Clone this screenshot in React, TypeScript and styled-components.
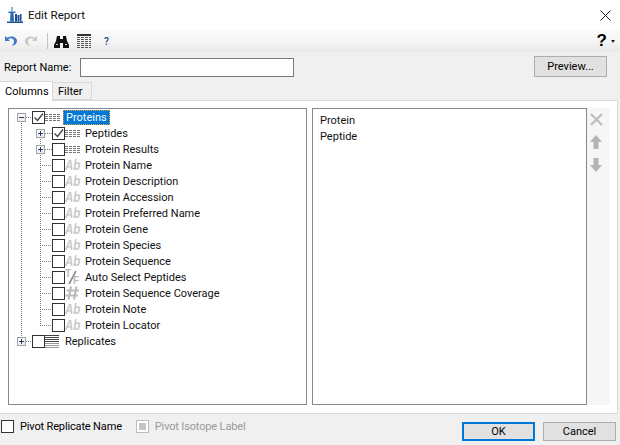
import React from 'react';
import styled, { createGlobalStyle } from 'styled-components';

const GlobalStyle = createGlobalStyle`
  html, body { margin: 0; padding: 0; background: #f0f0f0; }
  body { font-family: Roboto, "Noto Sans", sans-serif; font-size: 11px; color: #000; }
`;

const Dialog = styled.div`
  width: 620px;
  height: 445px;
  display: flex;
  flex-direction: column;
  overflow: hidden;
  background: #f0f0f0;
`;

/* ---------- title bar ---------- */
const TitleBar = styled.div`
  height: 30px;
  display: flex;
  align-items: center;
  padding-left: 7px;
  gap: 5px;
  background: #fff;
  font-size: 11.6px;
`;
const TitleText = styled.span`
  flex: 1;
  color: #111;
`;
const CloseBox = styled.div`
  width: 30px;
  display: flex;
  justify-content: center;
`;

/* ---------- toolbar ---------- */
const ToolBar = styled.div`
  height: 22px;
  display: flex;
  align-items: center;
  padding: 0 3px 0 4px;
  background: linear-gradient(#fbfbfb, #f6f6f6 45%, #e9e9e9);
`;
const ToolSlot = styled.div<{ $gap: number; $flip?: boolean }>`
  display: flex;
  margin-left: ${p => p.$gap}px;
  ${p => p.$flip && 'transform: scaleX(-1);'}
`;
const ToolSep = styled.div`
  width: 1px;
  height: 16px;
  background: #c4c4c4;
  margin-left: 9px;
`;
const HelpMark = styled.span`
  font-size: 10px;
  margin-left: 13px;
  color: #1a3f7a;
  font-weight: 500;
`;
const BigHelp = styled.span`
  margin-left: auto;
  font-family: "Liberation Sans", sans-serif;
  font-size: 17px;
  font-weight: 700;
  display: flex;
  align-items: center;
  gap: 4px;
  padding-right: 2px;
`;
const Caret = styled.i`
  width: 0;
  height: 0;
  border-left: 2.5px solid transparent;
  border-right: 2.5px solid transparent;
  border-top: 3px solid #222;
`;

/* ---------- report name ---------- */
const NameRow = styled.div`
  height: 29px;
  display: flex;
  align-items: flex-start;
  padding: 0 13px 0 4px;
`;
const NameLabel = styled.label`
  width: 76px;
  margin-top: 9px;
`;
const NameInput = styled.div`
  width: 214px;
  height: 19px;
  box-sizing: border-box;
  margin-top: 6px;
  background: #fff;
  border: 1px solid #7a7a7a;
`;
const PreviewButton = styled.div`
  margin-left: auto;
  width: 73px;
  height: 21px;
  box-sizing: border-box;
  margin-top: 4px;
  display: flex;
  align-items: center;
  justify-content: center;
  background: #e1e1e1;
  border: 1px solid #adadad;
`;

/* ---------- tabs ---------- */
const TabStrip = styled.div`
  height: 19px;
  display: flex;
  align-items: flex-end;
`;
const Tab = styled.div<{ $active?: boolean }>`
  height: ${p => (p.$active ? 20 : 18)}px;
  width: ${p => (p.$active ? 53 : 39)}px;
  margin-bottom: ${p => (p.$active ? -1 : 0)}px;
  box-sizing: border-box;
  display: flex;
  align-items: center;
  padding-left: 5px;
  background: ${p => (p.$active ? '#fff' : '#f0f0f0')};
  border: 1px solid #d9d9d9;
  border-bottom: ${p => (p.$active ? 'none' : '1px solid #d9d9d9')};
  border-left: ${p => (p.$active ? 'none' : '0')};
  position: relative;
  z-index: ${p => (p.$active ? 1 : 0)};
`;
const TabPanel = styled.div`
  height: 314px;
  width: 618px;
  box-sizing: border-box;
  background: #fff;
  border-top: 1px solid #d9d9d9;
  border-right: 1px solid #d9d9d9;
  border-bottom: 1px solid #d9d9d9;
  display: flex;
  padding: 7px 7px 8px 8px;
`;

/* ---------- tree ---------- */
const dotsV = 'repeating-linear-gradient(#808080 0 1px, transparent 1px 2px)';
const dotsH = 'repeating-linear-gradient(90deg, #808080 0 1px, transparent 1px 2px)';

const TreeBox = styled.div`
  width: 299px;
  box-sizing: border-box;
  border: 1px solid #828790;
  background: #fff;
`;
const TreeRow = styled.div`
  height: 16px;
  display: flex;
  align-items: center;
  white-space: nowrap;
  color: #111;
`;
const Spacer = styled.div<{ $w: number }>`
  width: ${p => p.$w}px;
  height: 16px;
  flex: none;
`;
const Guide = styled(Spacer)`
  background: ${dotsV} left / 1px 100% no-repeat;
`;
/* horizontal connector with the node's piece of vertical line */
const Branch = styled(Spacer)<{ $last?: boolean }>`
  background:
    ${dotsH} left 8px / 100% 1px no-repeat,
    ${dotsV} left top / 1px ${p => (p.$last ? '50%' : '100%')} no-repeat;
`;
const ExpanderCell = styled.div<{ $w: number; $up?: boolean; $down?: boolean }>`
  width: ${p => p.$w}px;
  height: 16px;
  flex: none;
  display: flex;
  align-items: center;
  background:
    ${p => (p.$up ? `${dotsV} 4px top / 1px 50% no-repeat,` : '')}
    ${p => (p.$down ? `${dotsV} 4px bottom / 1px 50% no-repeat,` : '')}
    none;
`;
const Expander = styled.div`
  width: 9px;
  height: 9px;
  box-sizing: border-box;
  flex: none;
  border: 1px solid #a2a2a2;
  background: linear-gradient(135deg, #fff, #e4e8ef);
  display: flex;
  align-items: center;
  justify-content: center;
`;
const Dots = styled.div`
  flex: 1;
  height: 1px;
  background: ${dotsH};
`;
const Check = styled.div`
  width: 13px;
  height: 13px;
  box-sizing: border-box;
  flex: none;
  border: 1px solid #333;
  background: #fff;
  display: flex;
  align-items: center;
  justify-content: center;
`;
const IconCell = styled.div`
  width: 18px;
  height: 16px;
  flex: none;
  display: flex;
  align-items: center;
`;
const Label = styled.span<{ $selected?: boolean }>`
  height: 15px;
  line-height: 16px;
  padding: 0 2px;
  box-sizing: border-box;
  ${p => p.$selected && 'background: #0078d7; color: #fff; outline: 1px dotted #e8a33d; outline-offset: -1px; padding: 0 3px;'}
`;

/* ---------- list ---------- */
const ListBox = styled.div`
  width: 275px;
  margin-left: 5px;
  box-sizing: border-box;
  border: 1px solid #828790;
  padding: 4px 7px;
  background: #fff;
`;
const ListItem = styled.div`
  height: 16px;
  line-height: 16px;
  color: #111;
`;
const SideBar = styled.div`
  width: 23px;
  box-sizing: border-box;
  display: flex;
  flex-direction: column;
  align-items: center;
  gap: 9px;
  padding: 5px 5px 0 0;
  background: #f6f6f6;
  border-top-right-radius: 4px;
`;

/* ---------- footer ---------- */
const Footer = styled.div`
  flex: 1;
  display: flex;
  align-items: flex-start;
  padding: 8px 4px 0 1px;
`;
const FooterCheck = styled.div`
  display: flex;
  align-items: center;
  gap: 6px;
  margin-top: -2px;
  letter-spacing: -0.15px;
`;
const Disabled = styled(FooterCheck)`
  margin-left: 14px;
  color: #9a9a9a;
`;
const GrayCheck = styled.div`
  width: 13px;
  height: 13px;
  box-sizing: border-box;
  border: 1px solid #bcbcbc;
  background: #fff;
  display: flex;
  align-items: center;
  justify-content: center;
  &::after {
    content: '';
    width: 7px;
    height: 7px;
    background: #c4c4c4;
  }
`;
const DialogButton = styled.div<{ $primary?: boolean }>`
  width: 73px;
  height: 19px;
  box-sizing: border-box;
  display: flex;
  align-items: center;
  justify-content: center;
  background: #e1e1e1;
  border: ${p => (p.$primary ? '2px solid #0078d7' : '1px solid #adadad')};
  margin-left: ${p => (p.$primary ? 'auto' : '8px')};
`;

/* ---------- icons ---------- */
const AppIcon = () => (
  <svg width="16" height="16" viewBox="0 0 16 16">
    <path d="M0 14.500h16V16H0z" fill="#1d4f91" />
    <path d="M4.500 0h1v4h-1zM1.500 4.500h7V6H6.500L7 14.500H3L3.500 6h-2z" fill="#2a68b5" />
    <path d="M8 7h2v7.500H8zM10.500 8h2v6.500h-2zM13 7h1.500v7.500H13z" fill="#1d4f91" />
  </svg>
);
const CloseIcon = () => (
  <svg width="11" height="11" viewBox="0 0 11 11">
    <path d="M.5.500l10 10M10.500.500l-10 10" stroke="#222" strokeWidth="1" fill="none" />
  </svg>
);
const UndoIcon = ({ color }: { color: string }) => (
  <svg width="14" height="14" viewBox="0 0 14 14">
    <path d="M1 2v5h5L4.200 5.200C6.500 3.500 10 4.500 10 7.500 10 9.500 9 10.800 7.500 12 11 11.500 13 9.500 13 7 13 3 7.500 1 3 3.800z" fill={color} />
  </svg>
);
const Binoculars = () => (
  <svg width="15" height="13" viewBox="0 0 15 13">
    <path d="M3 1h3v3h3V1h3l1 5 2 4v3H9V8H6v5H0v-3l2-4z" fill="#111" />
    <path d="M2 9h2v1H2zM11 9h2v1h-2z" fill="#ccc" />
  </svg>
);
const GridIcon = () => (
  <svg width="14" height="14" viewBox="0 0 14 14">
    <rect x="0" y="0" width="14" height="2" fill="#333" />
    {[3, 5, 7, 9, 11, 13].map(y => (
      <path key={y} d={`M0 ${y + 0.5}h14`} stroke="#555" strokeDasharray="3 1" strokeWidth="1" />
    ))}
  </svg>
);
const MiniTable = () => (
  <svg width="15" height="7" viewBox="0 0 15 7">
    {[0.5, 2.5, 4.5, 6.5].map(y => (
      <path key={y} d={`M0 ${y}h15`} stroke="#777" strokeDasharray="3 1" strokeWidth="1" />
    ))}
  </svg>
);
const RowsIcon = () => (
  <svg width="14" height="14" viewBox="0 0 14 14">
    <path d="M0 1.500h14M0 3.500h14M0 5.500h14M0 7.500h14" stroke="#444" strokeWidth="1" />
    <path d="M0 9.500h14M0 11.500h14M0 13.500h14" stroke="#999" strokeWidth="1" />
  </svg>
);
const CheckMark = () => (
  <svg width="11" height="11" viewBox="0 0 11 11">
    <path d="M1.500 5.500l3 3L10 1.500" stroke="#444" strokeWidth="1.400" fill="none" />
  </svg>
);
const TextIcon = () => (
  <svg width="18" height="14" viewBox="0 0 18 14">
    <text transform="translate(0 12) scale(1 1.25)" fontFamily="Liberation Sans, sans-serif" fontStyle="italic" fontWeight="700" fontSize="11.500" fill="#c8c8c8">Ab</text>
  </svg>
);
const BoolIcon = () => (
  <svg width="18" height="16" viewBox="0 0 18 16">
    <text x="0" y="8" fontFamily="Liberation Sans, sans-serif" fontWeight="700" fontSize="10" fill="#bdbdbd">T</text>
    <path d="M11 2L4 15" stroke="#8c8c8c" strokeWidth="1.600" />
    <text x="8" y="15" fontFamily="Liberation Sans, sans-serif" fontWeight="700" fontSize="10" fill="#bdbdbd">F</text>
  </svg>
);
const HashIcon = () => (
  <svg width="18" height="16" viewBox="0 0 18 16">
    <path d="M6 1.500L3.500 14.500M11.500 1.500L9 14.500M1.500 5.500h12.500M.5 10.500h12.500" stroke="#bcbcbc" strokeWidth="2.200" fill="none" />
  </svg>
);
const CrossIcon = () => (
  <svg width="13" height="13" viewBox="0 0 13 13">
    <path d="M1 1l11 11M12 1L1 12" stroke="#bdbdbd" strokeWidth="2.200" />
  </svg>
);
const ArrowIcon = ({ down }: { down?: boolean }) => (
  <svg width="12" height="14" viewBox="0 0 12 14">
    <path d={down ? 'M3.500 0h5v7H12l-6 7-6-7h3.500z' : 'M6 0l6 7H8.500v7h-5V7H0z'} fill="#b4b4b4" />
  </svg>
);
const PlusMinus = ({ open }: { open?: boolean }) => (
  <svg width="7" height="7" viewBox="0 0 7 7">
    <path d={open ? 'M1 3.500h5' : 'M1 3.500h5M3.500 1v5'} stroke="#2a3a5c" strokeWidth="1" />
  </svg>
);

/* ---------- data ---------- */
type Kind = 'text' | 'bool' | 'num';
const leaves: { name: string; kind: Kind }[] = [
  { name: 'Protein Name', kind: 'text' },
  { name: 'Protein Description', kind: 'text' },
  { name: 'Protein Accession', kind: 'text' },
  { name: 'Protein Preferred Name', kind: 'text' },
  { name: 'Protein Gene', kind: 'text' },
  { name: 'Protein Species', kind: 'text' },
  { name: 'Protein Sequence', kind: 'text' },
  { name: 'Auto Select Peptides', kind: 'bool' },
  { name: 'Protein Sequence Coverage', kind: 'num' },
  { name: 'Protein Note', kind: 'text' },
  { name: 'Protein Locator', kind: 'text' },
];

const KindIcon = ({ kind }: { kind: Kind }) =>
  kind === 'bool' ? <BoolIcon /> : kind === 'num' ? <HashIcon /> : <TextIcon />;

export default function App() {
  return (
    <Dialog>
      <GlobalStyle />
      <TitleBar>
        <AppIcon />
        <TitleText>Edit Report</TitleText>
        <CloseBox><CloseIcon /></CloseBox>
      </TitleBar>

      <ToolBar>
        <UndoIcon color="#3f78c4" />
        <ToolSlot $gap={6} $flip><UndoIcon color="#c9c9c9" /></ToolSlot>
        <ToolSep />
        <ToolSlot $gap={6}><Binoculars /></ToolSlot>
        <ToolSlot $gap={8}><GridIcon /></ToolSlot>
        <HelpMark>?</HelpMark>
        <BigHelp>?<Caret /></BigHelp>
      </ToolBar>

      <NameRow>
        <NameLabel>Report Name:</NameLabel>
        <NameInput />
        <PreviewButton>Preview...</PreviewButton>
      </NameRow>

      <TabStrip>
        <Tab $active>Columns</Tab>
        <Tab>Filter</Tab>
      </TabStrip>

      <TabPanel>
        <TreeBox>
          <TreeRow>
            <Spacer $w={8} />
            <ExpanderCell $w={15} $down><Expander><PlusMinus open /></Expander><Dots /></ExpanderCell>
            <Check><CheckMark /></Check>
            <IconCell><MiniTable /></IconCell>
            <Label $selected>Proteins</Label>
          </TreeRow>
          <TreeRow>
            <Spacer $w={12} />
            <Guide $w={15} />
            <ExpanderCell $w={16} $down><Expander><PlusMinus /></Expander><Dots /></ExpanderCell>
            <Check><CheckMark /></Check>
            <IconCell><MiniTable /></IconCell>
            <Label>Peptides</Label>
          </TreeRow>
          <TreeRow>
            <Spacer $w={12} />
            <Guide $w={15} />
            <ExpanderCell $w={16} $up $down><Expander><PlusMinus /></Expander><Dots /></ExpanderCell>
            <Check />
            <IconCell><MiniTable /></IconCell>
            <Label>Protein Results</Label>
          </TreeRow>
          {leaves.map((leaf, i) => (
            <TreeRow key={leaf.name}>
              <Spacer $w={12} />
              <Guide $w={19} />
              <Branch $w={12} $last={i === leaves.length - 1} />
              <Check />
              <IconCell><KindIcon kind={leaf.kind} /></IconCell>
              <Label>{leaf.name}</Label>
            </TreeRow>
          ))}
          <TreeRow>
            <Spacer $w={8} />
            <ExpanderCell $w={15} $up><Expander><PlusMinus /></Expander><Dots /></ExpanderCell>
            <Check />
            <IconCell><RowsIcon /></IconCell>
            <Label>Replicates</Label>
          </TreeRow>
        </TreeBox>
        <ListBox>
          <ListItem>Protein</ListItem>
          <ListItem>Peptide</ListItem>
        </ListBox>
        <SideBar>
          <CrossIcon />
          <ArrowIcon />
          <ArrowIcon down />
        </SideBar>
      </TabPanel>

      <Footer>
        <FooterCheck><Check />Pivot Replicate Name</FooterCheck>
        <Disabled><GrayCheck />Pivot Isotope Label</Disabled>
        <DialogButton $primary>OK</DialogButton>
        <DialogButton>Cancel</DialogButton>
      </Footer>
    </Dialog>
  );
}
